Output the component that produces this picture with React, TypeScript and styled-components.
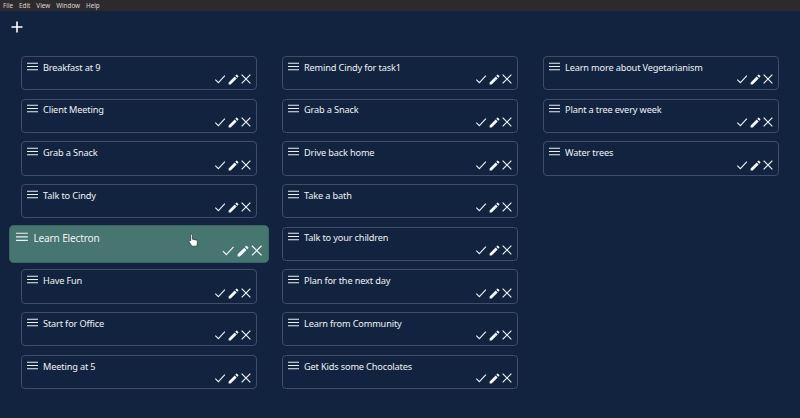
import React from "react";
import styled, { createGlobalStyle } from "styled-components";

const columns = [
  [
    "Breakfast at 9",
    "Client Meeting",
    "Grab a Snack",
    "Talk to Cindy",
    "Learn Electron",
    "Have Fun",
    "Start for Office",
    "Meeting at 5",
  ],
  [
    "Remind Cindy for task1",
    "Grab a Snack",
    "Drive back home",
    "Take a bath",
    "Talk to your children",
    "Plan for the next day",
    "Learn from Community",
    "Get Kids some Chocolates",
  ],
  ["Learn more about Vegetarianism", "Plant a tree every week", "Water trees"],
];

const menus = ["File", "Edit", "View", "Window", "Help"];

const App = () => {
  return (
    <Page>
      <GlobalStyle />
      <MenuBar>
        {menus.map((m) => (
          <MenuItem key={m}>{m}</MenuItem>
        ))}
      </MenuBar>
      <AddButton>
        <svg width="12" height="12" viewBox="0 0 12 12">
          <path d="M6 0.5v11M0.5 6h11" stroke="#fff" strokeWidth="1.6" />
        </svg>
      </AddButton>
      <Board>
        {columns.map((col, i) => (
          <Column key={i}>
            {col.map((title) => (
              <Card key={title} $active={title === "Learn Electron"}>
                <CardTop>
                  <Handle viewBox="0 0 12 9">
                    <path d="M0 1h12M0 4.5h12M0 8h12" stroke="#eef1f5" strokeWidth="1.1" />
                  </Handle>
                  <Title>{title}</Title>
                </CardTop>
                <Actions>
                  <Icon viewBox="0 0 11 11">
                    <path d="M1.2 6l2.8 2.8L10 2.4" fill="none" stroke="#eef1f5" strokeWidth="1" />
                  </Icon>
                  <Icon viewBox="0 0 22 22">
                    <path
                      d="M3 17.25V21h3.75L17.81 9.94l-3.75-3.75L3 17.25zM20.71 7.04a1 1 0 0 0 0-1.41l-2.34-2.34a1 1 0 0 0-1.41 0l-1.83 1.83 3.75 3.75 1.83-1.83z"
                      fill="#f6f7f9"
                    />
                  </Icon>
                  <Icon viewBox="0 0 11 11">
                    <path d="M1.5 1.5l8 8M9.5 1.5l-8 8" fill="none" stroke="#eef1f5" strokeWidth="1.1" />
                  </Icon>
                </Actions>
                {title === "Learn Electron" && (
                  <Cursor width="9" height="13" viewBox="0 0 9 13">
                    <path
                      d="M2.5 1c.6 0 1 .4 1 1v3.6l3.4.8c.8.2 1.3.8 1.2 1.6L7.6 12H3L.6 8.2c-.3-.5-.1-1 .3-1.2.4-.2.8 0 1 .3V2c0-.6 0-1 .6-1z"
                      fill="#fff"
                      stroke="#222"
                      strokeWidth="0.6"
                    />
                  </Cursor>
                )}
              </Card>
            ))}
          </Column>
        ))}
      </Board>
    </Page>
  );
};

export default App;

const GlobalStyle = createGlobalStyle`
  html, body {
    margin: 0;
    padding: 0;
    background: #12233f;
  }
`;

const Page = styled.div`
  width: 800px;
  height: 418px;
  overflow: hidden;
  background: #12233f;
  font-family: "Noto Sans", Verdana, sans-serif;
`;

const MenuBar = styled.div`
  height: 11px;
  background: #2b2b2d;
  display: flex;
  align-items: center;
  gap: 6px;
  padding-left: 3px;
`;

const MenuItem = styled.span`
  font-size: 6.3px;
  color: #d8d8d8;
`;

const AddButton = styled.div`
  display: flex;
  padding: 10px 0 0 11px;
  height: 12px;
`;

const Board = styled.div`
  display: flex;
  gap: 25.5px;
  padding: 23px 0 0 21px;
`;

const Column = styled.div`
  width: 235.5px;
  display: flex;
  flex-direction: column;
  gap: 8.4px;
`;

const Card = styled.div<{ $active?: boolean }>`
  position: relative;
  height: 34.3px;
  box-sizing: border-box;
  padding: 4.2px 4px 0 5px;
  display: flex;
  flex-direction: column;
  border-radius: 4px;
  border: 1px solid ${(p) => (p.$active ? "#47756f" : "#3f4d66")};
  background: ${(p) => (p.$active ? "#47756f" : "transparent")};
  transform: ${(p) => (p.$active ? "scale(1.1)" : "none")};
`;

const CardTop = styled.div`
  display: flex;
  align-items: center;
  gap: 5px;
  height: 12px;
`;

const Handle = styled.svg`
  width: 11px;
  height: 9px;
  flex: none;
  margin-top: -2px;
`;

const Title = styled.span`
  font-size: 9.2px;
  letter-spacing: -0.15px;
  color: #f0f2f6;
  white-space: nowrap;
`;

const Actions = styled.div`
  display: flex;
  justify-content: flex-end;
  gap: 1px;
  margin-top: 0;
`;

const Icon = styled.svg`
  flex: none;
  width: 12px;
  height: 12px;
`;

const Cursor = styled.svg`
  position: absolute;
  left: 162px;
  top: 6px;
`;
